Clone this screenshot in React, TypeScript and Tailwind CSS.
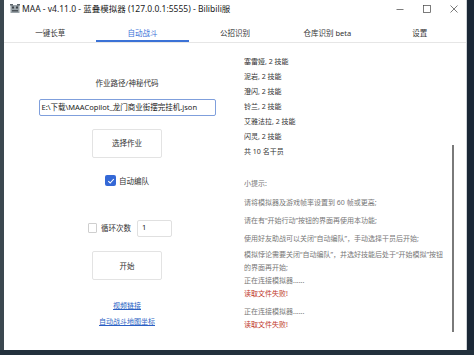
import React from 'react'

const tabs = ['一键长草', '自动战斗', '公招识别', '仓库识别 beta', '设置']

const operators = [
  '塞雷娅, 2 技能',
  '泥岩, 2 技能',
  '澄闪, 2 技能',
  '铃兰, 2 技能',
  '艾雅法拉, 2 技能',
  '闪灵, 2 技能',
  '共 10 名干员',
]

const AppIcon = () => (
  <svg width="10" height="10" viewBox="0 0 10 10">
    <rect x="0.5" y="1" width="9" height="8" fill="#9aa3a8" />
    <rect x="2" y="2.5" width="2" height="2" fill="#3c4348" />
    <rect x="6" y="2.5" width="2" height="2" fill="#3c4348" />
    <rect x="2" y="6" width="6" height="1.5" fill="#4b5358" />
    <rect x="0" y="0" width="3" height="1.5" fill="#5e676c" />
    <rect x="7" y="0" width="3" height="1.5" fill="#5e676c" />
  </svg>
)

const WindowControls = () => (
  <div className="ml-auto flex items-center gap-[17px] pr-[7px]">
    <svg width="10" height="10" viewBox="0 0 10 10">
      <line x1="1.5" y1="5.5" x2="8.5" y2="5.5" stroke="#444" strokeWidth="0.7" />
    </svg>
    <svg width="10" height="10" viewBox="0 0 10 10">
      <rect x="1.5" y="1.5" width="7" height="7" fill="none" stroke="#444" strokeWidth="0.7" />
    </svg>
    <svg width="10" height="10" viewBox="0 0 10 10">
      <path d="M1.5 1.5 L8.5 8.5 M8.5 1.5 L1.5 8.5" stroke="#444" strokeWidth="0.7" />
    </svg>
  </div>
)

const Button = ({ label }: { label: string }) => (
  <button className="w-[70px] h-[29px] bg-white border border-[#e3e3e3] rounded-[2px] text-[7.5px] leading-[10px] text-[#333]">
    {label}
  </button>
)

export default function App() {
  return (
    <div className="w-[474px] h-[355px] overflow-hidden bg-[#22303c] flex font-['Noto_Sans','Noto_Sans_CJK_SC',sans-serif]">
      <div className="w-[4px] h-[350px] bg-[#3b4850]" />
      <div className="w-[463px] h-[350px] bg-white flex flex-col border-r border-[#cfd3d6]">
        {/* title bar */}
        <div className="h-[18px] flex items-center pl-[6px]">
          <AppIcon />
          <span className="ml-[2px] text-[8.5px] leading-[10px] text-[#222] whitespace-nowrap">
            MAA - v4.11.0 - 蓝叠模拟器 (127.0.0.1:5555) - Bilibili服
          </span>
          <WindowControls />
        </div>

        {/* tabs */}
        <div className="h-[25px] flex border-b border-[#e6e6e6]">
          {tabs.map((t, i) => (
            <div key={t} className="flex-1 relative flex justify-center">
              <span
                className={
                  'pt-[10px] text-[7.5px] leading-[10px] whitespace-nowrap ' +
                  (i === 1 ? 'text-[#3a73d8]' : 'text-[#333]')
                }
              >
                {t}
              </span>
              {i === 1 && <div className="absolute left-0 right-0 bottom-0 h-[2px] bg-[#3b72d6]" />}
            </div>
          ))}
        </div>

        <div className="flex flex-1">
          {/* left panel */}
          <div className="w-[240px] pl-[6px] flex flex-col items-center">
            <div className="mt-[35px] text-[7.5px] leading-[10px] text-[#333]">作业路径/神秘代码</div>
            <div className="mt-[11px] w-[177px] h-[17px] border border-[#7f9fdc] rounded-[2px] flex items-center pl-[2px] text-[7.5px] text-[#222] whitespace-nowrap overflow-hidden">
              E:\下载\MAACopilot_龙门商业街摆完挂机.json
            </div>
            <div className="mt-[12px]">
              <Button label="选择作业" />
            </div>
            <div className="mt-[17px] flex items-center h-[12px]">
              <div className="w-[11px] h-[11px] rounded-[2px] bg-[#3468d6] flex items-center justify-center">
                <svg width="8" height="8" viewBox="0 0 8 8">
                  <path d="M1.3 4.2 L3.2 6 L6.8 2" fill="none" stroke="#fff" strokeWidth="1.1" />
                </svg>
              </div>
              <span className="ml-[3px] text-[7.5px] leading-[10px] text-[#333]">自动编队</span>
            </div>
            <div className="mt-[33px] ml-[6px] flex items-center h-[17px]">
              <div className="w-[9px] h-[10px] border border-[#cfcfcf] rounded-[1px] bg-white" />
              <span className="ml-[4px] text-[7.5px] leading-[10px] text-[#333]">循环次数</span>
              <div className="ml-[6px] w-[35px] h-[17px] border border-[#e0e0e0] rounded-[2px] flex items-center pl-[4px] text-[7.5px] text-[#222]">
                1
              </div>
            </div>
            <div className="mt-[14px]">
              <Button label="开始" />
            </div>
            <a className="mt-[21px] text-[7px] leading-[10px] text-[#2a5fc4] underline">视频链接</a>
            <a className="mt-[6px] text-[7px] leading-[10px] text-[#2a5fc4] underline">自动战斗地图坐标</a>
          </div>

          {/* right panel: log */}
          <div className="flex-1 relative">
            <div className="mt-[15px] h-[286px] overflow-hidden">
              <div className="-mt-[4px]">
                {operators.map((o) => (
                  <div key={o} className="text-[7px] leading-[15px] text-[#333] whitespace-nowrap">
                    {o}
                  </div>
                ))}
                <div className="mt-[18px] text-[7px] leading-[13px] text-[#777] whitespace-nowrap">
                  <div className="mb-[6px]">小提示:</div>
                  <div className="mb-[5px]">请将模拟器及游戏帧率设置到 60 帧或更高;</div>
                  <div className="mb-[5px]">请在有“开始行动”按钮的界面再使用本功能;</div>
                  <div className="mb-[3px]">使用好友助战可以关闭“自动编队”，手动选择干员后开始;</div>
                  <div>
                    模拟悖论需要关闭“自动编队”，并选好技能后处于“开始模拟”按钮
                    <br />
                    的界面再开始;
                  </div>
                  <div>正在连接模拟器......</div>
                  <div className="mb-[5px] text-[#c0392b]">读取文件失败!</div>
                  <div>正在连接模拟器......</div>
                  <div className="text-[#c0392b]">读取文件失败!</div>
                </div>
              </div>
            </div>
            <div className="absolute left-[208px] top-[102px] w-[1.5px] h-[187px] bg-[#7a7a7a]" />
          </div>
        </div>
      </div>
      <div className="flex-1 h-[350px] bg-[#1b2736]" />
    </div>
  )
}
